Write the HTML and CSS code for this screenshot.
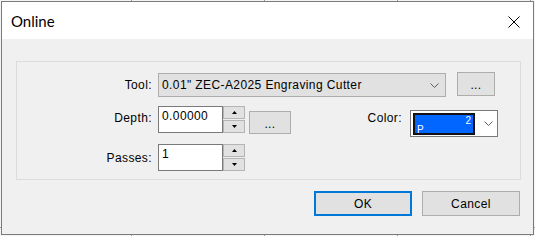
FILE: index.html
```html
<!DOCTYPE html>
<html>
<head>
<meta charset="utf-8">
<link rel="stylesheet" href="styles.css">
</head>
<body>
<div class="window">
  <div class="titlebar">
    <span class="title">Online</span>
    <svg class="close" width="12" height="12" viewBox="0 0 12 12"><path d="M0.5 0.5 L11.5 11.5 M11.5 0.5 L0.5 11.5" stroke="#000" stroke-width="1" fill="none"/></svg>
  </div>
  <div class="content">
    <div class="group">
      <div class="row row-tool">
        <span class="lbl">Tool:</span>
        <div class="combo">
          <span class="combo-text">0.01" ZEC-A2025 Engraving Cutter</span>
          <svg class="chev" width="9" height="5" viewBox="0 0 9 5"><polyline points="0.5,0.5 4.5,4.5 8.5,0.5" stroke="#5f5f5f" stroke-width="1" fill="none"/></svg>
        </div>
        <div class="btn btn-tool">...</div>
      </div>
      <div class="row row-depth">
        <span class="lbl">Depth:</span>
        <div class="spin">
          <div class="edit">0.00000</div>
          <div class="spin-btns">
            <div class="sb"><svg width="5" height="3" viewBox="0 0 5 3"><polygon points="0,3 2.5,0 5,3" fill="#000"/></svg></div>
            <div class="sb"><svg width="5" height="3" viewBox="0 0 5 3"><polygon points="0,0 5,0 2.5,3" fill="#000"/></svg></div>
          </div>
        </div>
        <div class="btn btn-depth">...</div>
        <span class="lbl-color">Color:</span>
        <div class="color-combo">
          <div class="swatch">
            <span class="sw-num">2</span>
            <span class="sw-p">P</span>
          </div>
          <svg class="chev" width="9" height="5" viewBox="0 0 9 5"><polyline points="0.5,0.5 4.5,4.5 8.5,0.5" stroke="#5f5f5f" stroke-width="1" fill="none"/></svg>
        </div>
      </div>
      <div class="row row-passes">
        <span class="lbl">Passes:</span>
        <div class="spin">
          <div class="edit">1</div>
          <div class="spin-btns">
            <div class="sb"><svg width="5" height="3" viewBox="0 0 5 3"><polygon points="0,3 2.5,0 5,3" fill="#000"/></svg></div>
            <div class="sb"><svg width="5" height="3" viewBox="0 0 5 3"><polygon points="0,0 5,0 2.5,3" fill="#000"/></svg></div>
          </div>
        </div>
      </div>
    </div>
    <div class="buttons">
      <div class="btn btn-ok">OK</div>
      <div class="btn btn-cancel">Cancel</div>
    </div>
  </div>
</div>
</body>
</html>
```
FILE: styles.css
```css
html, body {
  margin: 0;
  padding: 0;
}
body {
  width: 535px;
  height: 236px;
  overflow: hidden;
  background-color: #f4f4f4;
  background-image:
    repeating-linear-gradient(to right, transparent 0 131px, #9a9a9a 131px 132px, transparent 132px 133px),
    linear-gradient(to bottom, transparent 0 227px, #9a9a9a 227px 228px, transparent 228px);
  font-family: "Liberation Sans", Arial, sans-serif;
  font-size: 12px;
  color: #000;
}
.window {
  box-sizing: border-box;
  margin: 1px 0 0 1px;
  width: 533px;
  height: 234px;
  border: 1px solid #7a7a7a;
  background: #f0f0f0;
  display: flex;
  flex-direction: column;
}
.titlebar {
  height: 37px;
  background: #fff;
  display: flex;
  align-items: center;
  justify-content: space-between;
  padding: 0 13px 0 9px;
}
.title {
  font-family: Lato, "Open Sans", sans-serif;
  font-size: 15px;
  color: #000;
  margin-top: 1px;
}
.close {
  display: block;
  margin-top: 2px;
}
.content {
  padding: 22px 0 0 14px;
}
.group {
  box-sizing: border-box;
  width: 505px;
  height: 119px;
  border: 1px solid #dcdcdc;
  padding-top: 11px;
}
.row {
  display: flex;
  align-items: flex-start;
  letter-spacing: 0.4px;
}
.lbl {
  width: 135px;
  margin-right: 6px;
  text-align: right;
  letter-spacing: 0.4px;
}
.row-tool .lbl {
  line-height: 25px;
}
.row-depth, .row-passes {
  margin-top: 8px;
}
.row-passes {
  margin-top: 7px;
}
.row-depth .lbl, .row-passes .lbl {
  line-height: 25px;
  margin-top: 0;
}
.row-passes .lbl {
  line-height: 29px;
}
.combo {
  box-sizing: border-box;
  width: 288px;
  height: 24px;
  border: 1px solid #adadad;
  background: #e1e1e1;
  display: flex;
  align-items: center;
  justify-content: space-between;
  padding: 0 6px 0 3px;
}
.combo-text {
  white-space: nowrap;
}
.chev {
  display: block;
}
.btn {
  box-sizing: border-box;
  border: 1px solid #adadad;
  background: #e1e1e1;
  display: flex;
  align-items: center;
  justify-content: center;
  letter-spacing: 0.4px;
}
.btn-tool {
  width: 38px;
  height: 24px;
  margin-left: 11px;
  margin-top: -1px;
  padding-top: 2px;
}
.spin {
  display: flex;
}
.edit {
  box-sizing: border-box;
  width: 65px;
  height: 27px;
  border: 1px solid #7a7a7a;
  background: #fff;
  padding: 2px 0 0 3px;
  line-height: 14px;
}
.spin-btns {
  width: 22px;
  height: 27px;
  display: flex;
  flex-direction: column;
  justify-content: space-between;
}
.sb {
  box-sizing: border-box;
  height: 13px;
  border: 1px solid #b4b4b4;
  background: #e1e1e1;
  display: flex;
  align-items: center;
  justify-content: center;
}
.sb svg {
  display: block;
}
.btn-depth {
  width: 42px;
  height: 23px;
  margin-left: 4px;
  margin-top: 5px;
  padding-top: 2px;
}
.lbl-color {
  margin-left: auto;
  margin-right: 8px;
  line-height: 25px;
}
.color-combo {
  box-sizing: border-box;
  width: 88px;
  height: 27px;
  margin-top: 4px;
  margin-right: 22px;
  border: 1px solid #7a7a7a;
  background: #fff;
  display: flex;
  align-items: center;
  justify-content: space-between;
  padding: 0 4px 0 2px;
}
.swatch {
  box-sizing: border-box;
  width: 62px;
  height: 22px;
  border: 2px solid #111;
  background: #0066ff;
  color: #fff;
  font-size: 10px;
  line-height: 9px;
  display: flex;
  flex-direction: column;
  justify-content: space-between;
  padding: 1px 2px 0 2px;
  letter-spacing: 0;
}
.sw-num {
  align-self: flex-end;
}
.sw-p {
  align-self: flex-start;
}
.buttons {
  display: flex;
  justify-content: flex-end;
  gap: 10px;
  margin-top: 11px;
  margin-right: 13px;
}
.btn-ok, .btn-cancel {
  width: 98px;
  height: 25px;
}
.btn-ok {
  border: 2px solid #0078d7;
}
```
